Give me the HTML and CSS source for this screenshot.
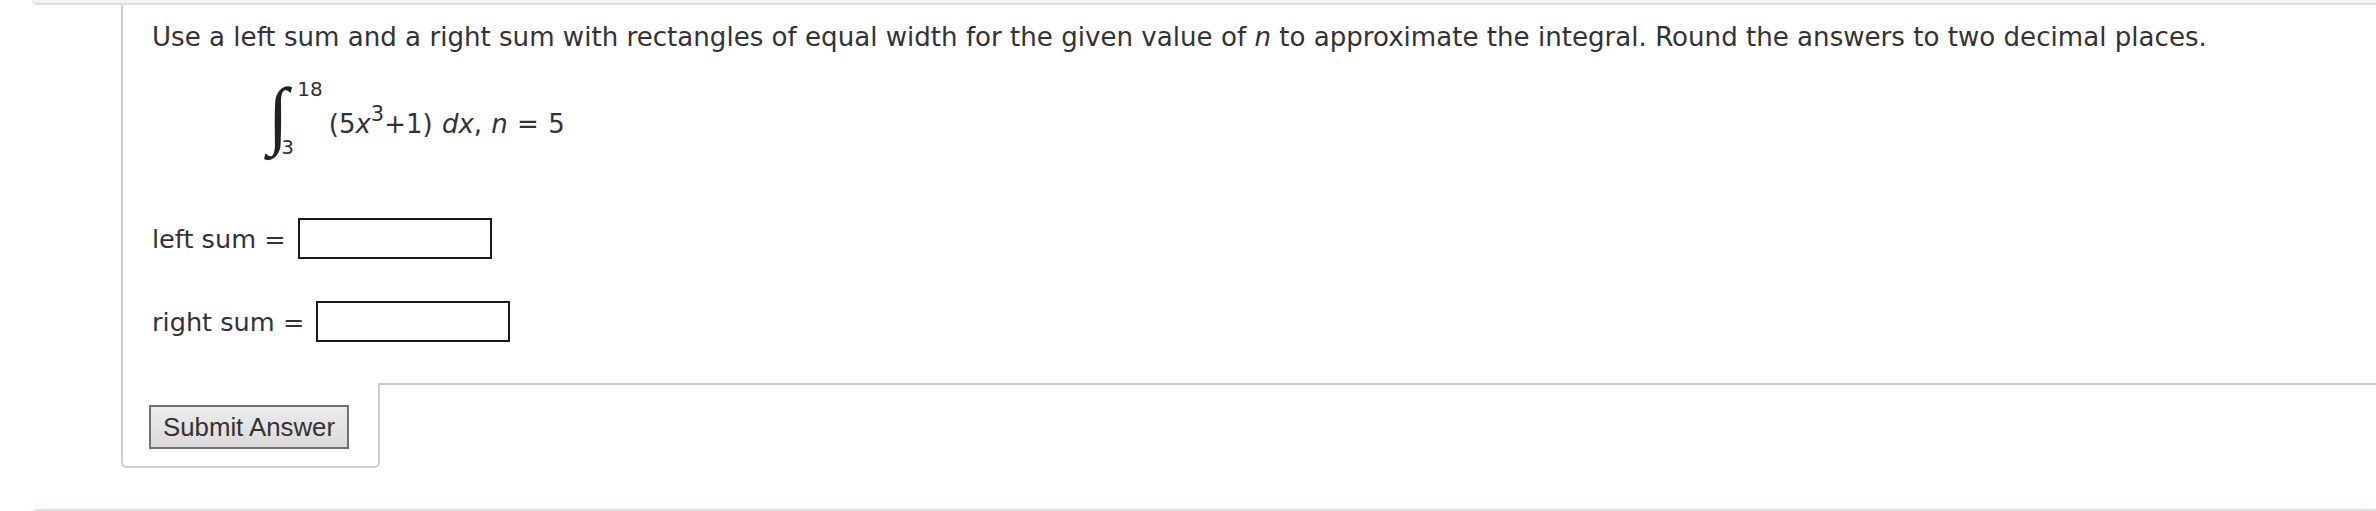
FILE: index.html
```html
<!DOCTYPE html>
<html lang="en">
<head>
  <meta charset="UTF-8">
  <meta name="viewport" content="width=device-width, initial-scale=1.0">
  <title>left and right sums</title>
  <link rel="stylesheet" href="styles.css">
</head>
<body>
  <div class="panel-prev"></div>

  <div class="question">
    <div class="question-body">
      <p class="prompt">Use a left sum and a right sum with rectangles of equal width for the given value of <i>n</i> to approximate the integral. Round the answers to two decimal places.</p>

      <div class="math">
        <span class="int-sign">&#8747;</span>
        <span class="limits">
          <span class="upper">18</span>
          <span class="lower">3</span>
        </span>
        <span class="expr">(5<i>x</i><sup>3</sup>+1) <i>dx</i>, <i>n</i> = 5</span>
      </div>

      <div class="answer-row">
        <span>left sum =</span>
        <input type="text" class="answer">
      </div>
      <div class="answer-row">
        <span>right sum =</span>
        <input type="text" class="answer">
      </div>
    </div>

    <div class="question-foot">
      <div class="tab">
        <button class="submit">Submit Answer</button>
      </div>
      <div class="filler"></div>
    </div>
  </div>

  <div class="panel-next"></div>
</body>
</html>
```

FILE: styles.css
```css
body {
  margin: 0;
  background: #fff;
  color: #333;
  font-family: "DejaVu Sans", Verdana, sans-serif;
  font-size: 25.6px;
}

.panel-prev {
  margin-left: 32px;
  height: 3px;
  background: #f2f2f2;
  border-bottom: 2px solid #dcdcdc;
  border-bottom-left-radius: 6px;
}

.question {
  margin-left: 121px;
}

.question-body {
  border-left: 2px solid #cdcdcd;
  padding: 13px 0 41px 29px;
}

.prompt {
  margin: 0;
  font-size: 26.1px;
  line-height: 38px;
}

/* integral */
.math {
  display: flex;
  align-items: center;
  margin: 22px 0 0 116px;
  height: 80px;
}
.int-sign {
  font-family: "Liberation Serif", serif;
  font-size: 74px;
  line-height: 80px;
  color: #222;
  transform: translateY(-4px) scaleY(1.02);
}
.limits {
  display: flex;
  flex-direction: column;
  justify-content: space-between;
  height: 80px;
  font-size: 20px;
  line-height: 22px;
  margin-left: 9px;
}
.limits .lower {
  margin-left: -16px;
}
.expr {
  font-size: 26px;
  margin-left: 6px;
  margin-top: 12px;
  word-spacing: 1px;
}
.expr sup {
  font-size: 21px;
  line-height: 0;
  vertical-align: 12px;
}

.answer-row {
  display: flex;
  align-items: center;
  gap: 12px;
  height: 41px;
  margin-top: 60px;
  line-height: 30px;
}
.answer-row + .answer-row {
  margin-top: 42px;
}
.answer {
  width: 194px;
  height: 41px;
  box-sizing: border-box;
  border: 2px solid #1a1a1a;
  margin: 0;
  padding: 0 4px;
  font-size: 22px;
}

.question-foot {
  display: flex;
}
.tab {
  width: 259px;
  box-sizing: border-box;
  border: 2px solid #cdcdcd;
  border-top: 0;
  border-radius: 0 0 6px 6px;
  padding: 22px 0 17px 26px;
}
.filler {
  flex: 1;
  border-top: 2px solid #c8c8c8;
}

.submit {
  font-family: "Liberation Sans", Arial, sans-serif;
  font-size: 25.8px;
  line-height: 30px;
  color: #333;
  padding: 5px 12px;
  border: 2px solid #707070;
  border-radius: 0;
  background: linear-gradient(#ececec, #dadada);
}

.panel-next {
  margin: 41px 0 0 32px;
  height: 10px;
  background: #f3f3f3;
  border-top: 2px solid #e0e0e0;
  border-top-left-radius: 6px;
  box-shadow: 0 -3px 8px rgba(0, 0, 0, 0.04);
}
```
